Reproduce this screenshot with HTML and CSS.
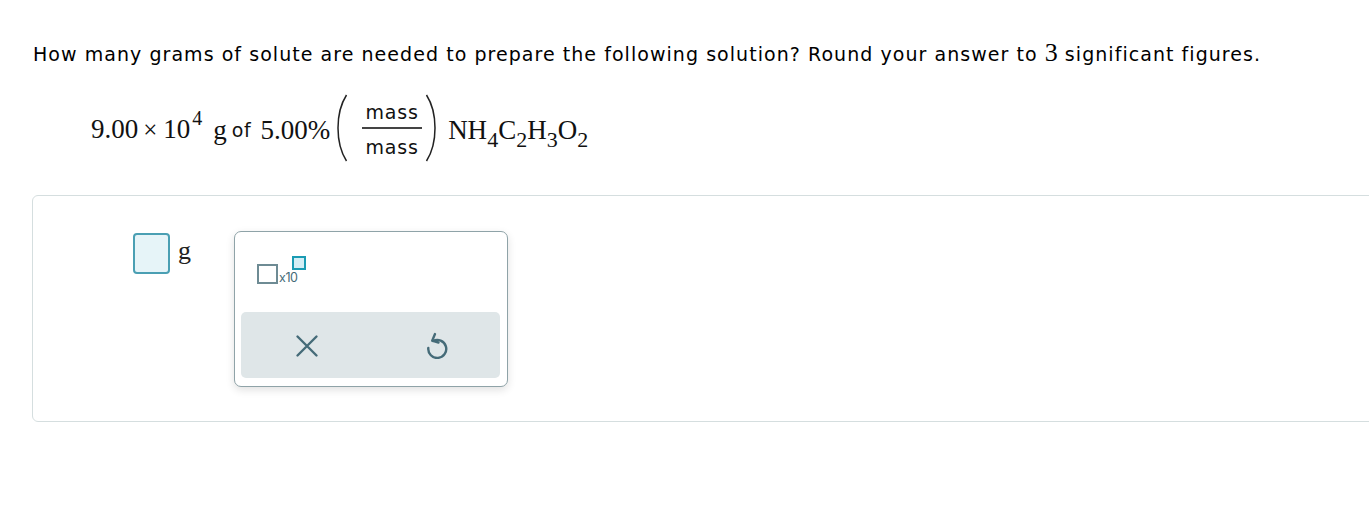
FILE: index.html
```html
<!DOCTYPE html>
<html>
<head>
<meta charset="utf-8">
<link rel="stylesheet" href="styles.css">
</head>
<body>
<div class="page">
  <p class="question">How many grams of solute are needed to prepare the following solution? Round your answer to <span class="serif num">3</span> significant figures.</p>
  <div class="math">
    <span class="serif mass-val">9.00<span class="times">×</span>10<sup class="sup">4</sup></span>
    <span class="serif g">g</span><span class="sans of">of</span><span class="serif pct">5.00%</span>
    <svg class="paren paren-l" width="12" height="68" viewBox="0 0 12 68"><path d="M10.5 1 C3.5 12 2 23 2 34 C2 45 3.5 56 10.5 67" fill="none" stroke="#222" stroke-width="1.5"/></svg>
    <span class="frac"><span class="numer">mass</span><span class="bar"></span><span class="denom">mass</span></span>
    <svg class="paren paren-r" width="12" height="68" viewBox="0 0 12 68"><path d="M1.5 1 C8.5 12 10 23 10 34 C10 45 8.5 56 1.5 67" fill="none" stroke="#222" stroke-width="1.5"/></svg>
    <span class="serif formula">NH<sub>4</sub>C<sub>2</sub>H<sub>3</sub>O<sub>2</sub></span>
  </div>
  <div class="answer">
    <div class="entry">
      <span class="inputbox"></span>
      <span class="serif unit">g</span>
    </div>
    <div class="palette">
      <div class="sci">
        <span class="sci-base"></span><span class="sci-x">x10</span><span class="sci-exp"></span>
      </div>
      <div class="actions">
        <svg class="icon-x" width="24" height="24" viewBox="0 0 24 24"><path d="M2.5 2.5 L21.5 21.5 M21.5 2.5 L2.5 21.5" stroke="#456b78" stroke-width="2.4" stroke-linecap="round"/></svg>
        <svg class="icon-undo" width="24" height="28" viewBox="0 0 24 28"><path d="M8 10 A9 9 0 1 1 3.3 17" fill="none" stroke="#456b78" stroke-width="2.4" stroke-linecap="round"/><path d="M10 3 L7.2 9.6 L13.5 11.5" fill="none" stroke="#456b78" stroke-width="2.4" stroke-linecap="round" stroke-linejoin="round"/></svg>
      </div>
    </div>
  </div>
</div>
</body>
</html>
```
FILE: styles.css
```css
html, body {
  margin: 0;
  padding: 0;
  background: #fff;
}
.page {
  padding: 41px 0 0 0;
  overflow: hidden;
}
.serif {
  font-family: "Liberation Serif", "Times New Roman", serif;
}
.sans {
  font-family: "DejaVu Sans", Verdana, sans-serif;
}
.question {
  margin: 0 0 0 33px;
  font-family: "DejaVu Sans", Verdana, sans-serif;
  font-size: 19px;
  letter-spacing: 1.05px;
  line-height: 26px;
  height: 26px;
  color: #000;
  white-space: nowrap;
}
.question .num {
  font-size: 26px;
  line-height: 20px;
  letter-spacing: 0;
}
.math {
  margin: 26px 0 0 91px;
  display: flex;
  align-items: center;
  height: 70px;
  font-size: 27px;
  color: #111;
  white-space: nowrap;
}
.mass-val {
  line-height: 30px;
  margin-top: 3px;
}
.mass-val .times {
  font-size: 25px;
  margin: 0 6px 0 5px;
}
.mass-val .sup {
  font-size: 20px;
  line-height: 0;
  vertical-align: 13px;
  margin-left: 2px;
}
.math .g {
  line-height: 30px;
  margin: 3px 0 0 11px;
}
.math .of {
  font-size: 19px;
  line-height: 30px;
  margin: 3px 9px 0 5px;
  letter-spacing: 0.6px;
}
.math .pct {
  line-height: 30px;
  margin-top: 3px;
}
.paren {
  display: block;
}
.paren-l {
  margin: 0 14px 0 6px;
}
.paren-r {
  margin: 0 11px 0 3px;
}
.frac {
  display: inline-flex;
  flex-direction: column;
  align-items: center;
  font-family: "DejaVu Sans", Verdana, sans-serif;
  font-size: 19px;
  letter-spacing: 0.8px;
  line-height: 22px;
  margin-top: 3px;
}
.frac .bar {
  display: block;
  width: 60px;
  height: 2px;
  background: #444;
  margin: 4px 0 7px;
}
.formula {
  margin-top: 3px;
  line-height: 30px;
}
.formula sub {
  font-size: 22px;
  vertical-align: -8px;
  line-height: 0;
}
.answer {
  margin: 32px 0 0 32px;
  width: 1400px;
  height: 227px;
  border: 1px solid #d5dedf;
  border-radius: 6px;
  box-sizing: border-box;
  display: flex;
  align-items: flex-start;
  padding: 35px 0 0 100px;
}
.entry {
  display: flex;
  align-items: center;
  gap: 8px;
  width: 101px;
  margin-top: 2px;
}
.inputbox {
  display: block;
  width: 37px;
  height: 41px;
  box-sizing: border-box;
  border: 2px solid #4a9fb3;
  border-radius: 4px;
  background: #e6f4f8;
}
.unit {
  font-size: 26px;
  color: #222;
  margin-top: -6px;
}
.palette {
  width: 274px;
  height: 156px;
  box-sizing: border-box;
  border: 1px solid #8fa3a8;
  border-radius: 7px;
  background: #fff;
  box-shadow: 0 3px 8px rgba(0,0,0,0.12);
  padding: 0 7px 8px 6px;
  display: flex;
  flex-direction: column;
}
.sci {
  height: 80px;
  display: flex;
  align-items: flex-start;
  padding: 32px 0 0 16px;
  box-sizing: border-box;
}
.sci-base {
  display: block;
  width: 21px;
  height: 20px;
  box-sizing: border-box;
  border: 2px solid #6e8b94;
  background: #fff;
}
.sci-x {
  font-family: "Inter", "DejaVu Sans", sans-serif;
  font-size: 12.5px;
  line-height: 14px;
  color: #456b78;
  margin: 7px 0 0 1px;
  letter-spacing: -0.4px;
}
.sci-exp {
  display: block;
  width: 14px;
  height: 14px;
  box-sizing: border-box;
  border: 2px solid #1a9bb3;
  background: #d4eef5;
  margin: -8px 0 0 -6px;
}
.actions {
  flex: 1;
  background: #dfe6e8;
  border-radius: 5px;
  display: flex;
  align-items: center;
  padding: 0 0 0 54px;
}
.icon-x {
  margin-top: 2px;
}
.icon-undo {
  margin: 0 0 0 106px;
}
```
